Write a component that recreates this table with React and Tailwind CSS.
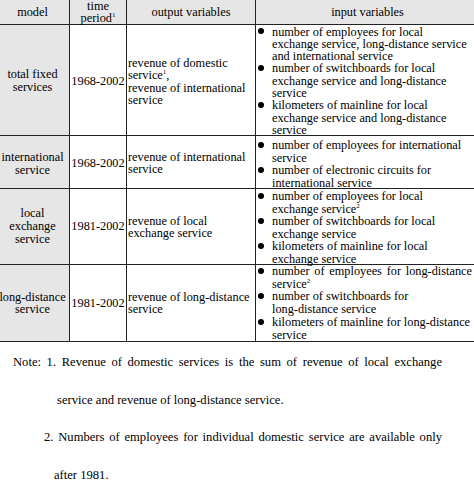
import React from "react";

function Sup({ children }) {
  return <span className="text-[7px] leading-none relative top-[-5px]">{children}</span>;
}

function Bullets({ items, lh, pt }) {
  return (
    <div className={`flex flex-col ${pt}`}>
      {items.map((lines, i) => (
        <div key={i} className="flex">
          <div className="w-[16px] shrink-0 relative">
            <span className="absolute left-[2px] w-[6px] h-[6px] rounded-full bg-black" style={{ top: `calc(${lh} / 2 - 3.5px)` }} />
          </div>
          <div className="flex-1 pr-[7px]">
            {lines.map((l, j) => (
              <div
                key={j}
                className={l.justify ? "whitespace-nowrap text-justify [text-align-last:justify]" : "whitespace-nowrap"}
                style={{ lineHeight: lh }}
              >
                {l.t}
              </div>
            ))}
          </div>
        </div>
      ))}
    </div>
  );
}

const cell = "border-r border-b border-[#222]";

export default function App() {
  return (
    <div className="w-[474px] h-[481px] overflow-hidden bg-white text-black relative font-['Liberation_Serif','Times_New_Roman',serif]">
      <div className="ml-[-4px] grid grid-cols-[74px_57px_129px_224px] grid-rows-[25px_111px_53px_76px_77px] text-[12.3px]">
        {/* header */}
        <div className={`${cell} bg-[#e6e6e6] flex items-center justify-center leading-[12px]`}>model</div>
        <div className={`${cell} bg-[#e6e6e6] flex flex-col items-center justify-center leading-[12px] pb-[1px]`}>
          <div>time</div>
          <div>period<Sup>1</Sup></div>
        </div>
        <div className={`${cell} bg-[#e6e6e6] flex items-center justify-center leading-[12px]`}>output variables</div>
        <div className={`${cell} bg-[#e6e6e6] flex items-center justify-center leading-[12px]`}>input variables</div>

        {/* row 1 */}
        <div className={`${cell} bg-[#e6e6e6] flex flex-col items-center justify-center leading-[13.5px] pt-[2px]`}>
          <div>total fixed</div>
          <div>services</div>
        </div>
        <div className={`${cell} flex items-center justify-center leading-[12.5px] pt-[2px]`}>1968-2002</div>
        <div className={`${cell} flex flex-col justify-center pl-[1px] leading-[12.4px] pt-[3px] whitespace-nowrap`}>
          <div>revenue of domestic</div>
          <div>service<Sup>1</Sup>,</div>
          <div>revenue of international</div>
          <div>service</div>
        </div>
        <div className={cell}>
          <Bullets
            lh="12.3px"
            pt="pt-[0.5px]"
            items={[
              [{ t: "number of employees for local" }, { t: "exchange service, long-distance service" }, { t: "and international service" }],
              [{ t: "number of switchboards for local" }, { t: "exchange service and long-distance" }, { t: "service" }],
              [{ t: "kilometers of mainline for local" }, { t: "exchange service and long-distance" }, { t: "service" }],
            ]}
          />
        </div>

        {/* row 2 */}
        <div className={`${cell} bg-[#e6e6e6] flex flex-col items-center justify-center leading-[13px] pt-[3px]`}>
          <div>international</div>
          <div>service</div>
        </div>
        <div className={`${cell} flex items-center justify-center leading-[12.5px] pt-[2px]`}>1968-2002</div>
        <div className={`${cell} flex flex-col justify-center pl-[1px] leading-[12.5px] pt-[2px] whitespace-nowrap`}>
          <div>revenue of international</div>
          <div>service</div>
        </div>
        <div className={cell}>
          <Bullets
            lh="12.5px"
            pt="pt-[3px]"
            items={[
              [{ t: "number of employees for international" }, { t: "service" }],
              [{ t: "number of electronic circuits for" }, { t: "international service" }],
            ]}
          />
        </div>

        {/* row 3 */}
        <div className={`${cell} bg-[#e6e6e6] flex flex-col items-center justify-center leading-[13px]`}>
          <div>local</div>
          <div>exchange</div>
          <div>service</div>
        </div>
        <div className={`${cell} flex items-center justify-center leading-[12.5px]`}>1981-2002</div>
        <div className={`${cell} flex flex-col justify-center pl-[1px] leading-[12px] whitespace-nowrap`}>
          <div>revenue of local</div>
          <div>exchange service</div>
        </div>
        <div className={cell}>
          <Bullets
            lh="12.5px"
            pt="pt-[1px]"
            items={[
              [{ t: "number of employees for local" }, { t: <>exchange service<Sup>2</Sup></> }],
              [{ t: "number of switchboards for local" }, { t: "exchange service" }],
              [{ t: "kilometers of mainline for local" }, { t: "exchange service" }],
            ]}
          />
        </div>

        {/* row 4 */}
        <div className={`${cell} bg-[#e6e6e6] flex flex-col items-center justify-center leading-[12.5px]`}>
          <div className="whitespace-nowrap">long-distance</div>
          <div>service</div>
        </div>
        <div className={`${cell} flex items-center justify-center leading-[12.5px]`}>1981-2002</div>
        <div className={`${cell} flex flex-col justify-center pl-[1px] leading-[12.5px] whitespace-nowrap`}>
          <div>revenue of long-distance</div>
          <div>service</div>
        </div>
        <div className={cell}>
          <Bullets
            lh="12.7px"
            pt="pt-0"
            items={[
              [{ t: "number of employees for long-distance", justify: true }, { t: <>service<Sup>2</Sup></> }],
              [{ t: "number of switchboards for" }, { t: "long-distance service" }],
              [{ t: "kilometers of mainline for long-distance" }, { t: "service" }],
            ]}
          />
        </div>
      </div>

      {/* notes */}
      <div className="mt-[2px] text-[12.6px] leading-[37.7px]">
        <div className="pl-[13px] w-[442px] whitespace-nowrap text-justify [text-align-last:justify]">
          Note: 1. Revenue of domestic services is the sum of revenue of local exchange
        </div>
        <div className="pl-[57px] whitespace-nowrap">service and revenue of long-distance service.</div>
        <div className="pl-[44px] w-[442px] whitespace-nowrap text-justify [text-align-last:justify]">
          2. Numbers of employees for individual domestic service are available only
        </div>
        <div className="pl-[54px] whitespace-nowrap">after 1981.</div>
      </div>
    </div>
  );
}
